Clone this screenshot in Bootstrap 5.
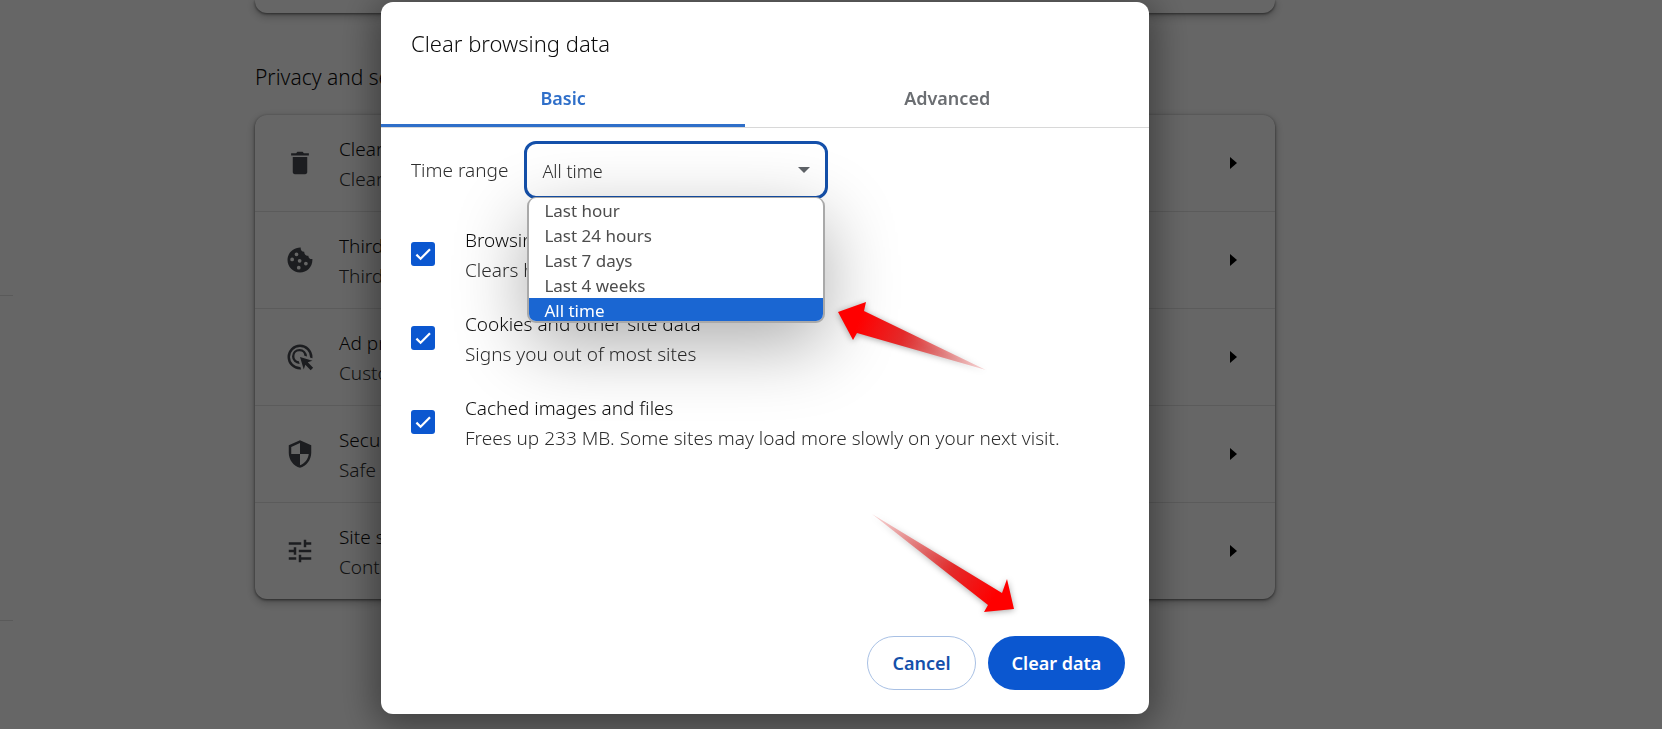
<!DOCTYPE html>
<html lang="en">
<head>
<meta charset="utf-8">
<meta name="viewport" content="width=device-width, initial-scale=1">
<title>Settings - Privacy and security</title>
<link href="https://cdn.jsdelivr.net/npm/bootstrap@5.3.0/dist/css/bootstrap.min.css" rel="stylesheet">
<style>
  :root { --gutter-end: 132px; --ink: #0c0c0c; --ink-soft: #2e2e2e; --accent: #0b57d0; --line: #e3e3e3; }
  body { font-family: "Noto Sans", "Open Sans", sans-serif; font-size: 19px; font-weight: 300; line-height: 30px; color: var(--ink); background: #fff; overflow: hidden; }
  .settings-page { min-height: 100vh; padding-right: var(--gutter-end); }
  .side-menu { width: 13px; left: 0; top: 0; padding-top: 295px; }
  .side-menu hr { margin: 0; color: #000; opacity: .12; }
  .side-menu hr + hr { margin-top: 324px; }
  .settings-main { max-width: 1020px; }
  .panel { border: 0; border-radius: 12px; box-shadow: 0 1px 3px rgba(0,0,0,.55), 0 3px 8px 1px rgba(0,0,0,.22); }
  .panel-above { height: 13px; border-radius: 0 0 12px 12px; }
  .section-title { font-size: 21px; line-height: 30px; margin: 49px 0 23px; font-weight: 300; }
  .setting-row { height: 97px; padding: 0 38px 0 30px; border: 0; border-bottom: 1px solid var(--line); background: transparent; color: var(--ink); }
  .setting-row:last-child { border-bottom: 0; height: 96px; }
  .setting-row svg.row-icon { width: 30px; height: 30px; fill: #474a50; margin-right: 24px; flex: none; }
  .row-text { padding-top: 2px; }
  .soft-text { color: var(--ink-soft); }
  .modal-backdrop.show { opacity: .6; }
  .modal { padding-right: var(--gutter-end); overflow: hidden; }
  .clear-dialog { max-width: 768px; margin: 2px auto 0; }
  .clear-dialog .modal-content { min-height: calc(100vh - 17px); border: 0; border-radius: 12px; box-shadow: 0 6px 36px 6px rgba(0,0,0,.4); color: var(--ink); }
  .clear-dialog .modal-header { border: 0; padding: 27px 30px 13px; }
  .clear-dialog .modal-title { font-size: 22px; line-height: 28px; font-weight: 300; }
  .range-tabs { border-bottom: 1px solid #d8d8d8; }
  .range-tabs .nav-link { border: 0; border-radius: 0; border-bottom: 3px solid transparent; padding: 15px 12px 12px; line-height: 27px; font-weight: 600; font-size: 18px; color: #6b6e72; background: none; }
  .range-tabs .nav-link.active { color: #2f6fc9; background: none; border-color: #2f6fc9; border-radius: 0 3px 0 0; }
  .tab-basic { flex: 363 1 0; }
  .tab-advanced { flex: 405 1 0; }
  .clear-dialog .modal-body { padding: 13px 30px 0; }
  .range-row { height: 58px; gap: 16px; margin-bottom: 26px; }
  .range-select { width: 304px; height: 58px; border: 3px solid #1450aa; border-radius: 12px; padding: 3px 15px 0; font-size: 18px; font-weight: 300; color: var(--ink-soft); background-image: none; }
  .range-select:focus { border-color: #1450aa; box-shadow: none; }
  .range-caret { right: 18px; top: 26px; width: 12px; height: 6px; fill: #5f6368; }
  .range-list { left: 3px; right: 3px; top: 56px; background: #fff; border: 2px solid #a9a9a9; border-top-width: 1px; border-radius: 9px; overflow: hidden; z-index: 3; box-shadow: 0 22px 72px rgba(0,0,0,.32); }
  .range-list li { height: 25px; line-height: 25px; padding-left: 15px; font-size: 17px; font-weight: 400; color: #4d4d4d; }
  .range-list li.chosen { height: 23px; color: #fff; background: #1a66d2; }
  .data-list { gap: 24px; }
  .data-item { gap: 30px; padding: 0; margin: 0; min-height: 0; }
  .data-item .form-check-input { width: 24px; height: 24px; margin: 0 0 2px; float: none; border: 0; border-radius: 3px; flex: none; }
  .data-item .form-check-input:checked { background-color: var(--accent); background-size: 24px; background-image: url("data:image/svg+xml,%3csvg xmlns='http://www.w3.org/2000/svg' viewBox='0 0 24 24'%3e%3cpath fill='none' stroke='%23fff' stroke-width='2.2' d='M5.4 12.6l4.2 4.2L19 7.2'/%3e%3c/svg%3e"); }
  .clear-dialog .modal-footer { border: 0; padding: 0 24px 24px; gap: 12px; }
  .clear-dialog .modal-footer > * { margin: 0; }
  .pill { height: 54px; border-radius: 27px; font-size: 18px; font-weight: 600; padding: 0; }
  .pill-cancel { width: 109px; border: 1px solid #a8c0e4; color: #1450aa; background: #fff; }
  .pill-clear { width: 137px; border: 0; color: #fff; background: var(--accent); }
  .pointer-arrow { overflow: visible; pointer-events: none; filter: drop-shadow(0 1px 3px rgba(0,0,0,.35)); z-index: 4; }
  .arrow-range { width: 160px; height: 80px; left: 306px; top: 154px; }
  .arrow-clear { width: 160px; height: 112px; right: 124px; bottom: 94px; }
</style>
</head>
<body>
<div class="settings-page position-relative">
  <aside class="side-menu position-absolute"><hr><hr></aside>
  <main class="settings-main mx-auto">
    <div class="card panel panel-above"></div>
    <h2 class="section-title">Privacy and security</h2>
    <div class="card panel">
      <a href="#" class="setting-row d-flex align-items-center text-decoration-none">
        <svg class="row-icon" viewBox="0 0 24 24"><path d="M6.2 19.2c0 1.1.7 1.7 1.7 1.7h8.200c1 0 1.700-.6 1.700-1.700V7.200H6.200zM19.100 4.200h-4l-1-1.200H9.900l-1 1.200h-4v1.700h14.200z"/></svg>
        <div class="row-text flex-grow-1 text-nowrap"><div>Clear browsing data</div><div class="soft-text">Clear history, cookies, cache, and more</div></div>
        <svg width="7" height="14" viewBox="0 0 7 14"><path d="M0 1l7 6-7 6z"/></svg>
      </a>
      <a href="#" class="setting-row d-flex align-items-center text-decoration-none">
        <svg class="row-icon" viewBox="0 0 24 24"><path fill-rule="evenodd" d="M21.900 11.200c-1.700.3-3.300-.8-3.200-2.600-2.100.1-3.400-1-3.300-3.200-2 .1-3.100-1.500-2.800-3.400C6.800 1.800 2 6.300 2 12c0 5.500 4.500 10 10 10 5.700 0 10.300-4.900 9.900-10.800zM9.200 5.900a1.500 1.500 0 1 1 0 3 1.500 1.500 0 0 1 0-3zM5.700 10a1.500 1.500 0 1 1 0 3 1.500 1.500 0 0 1 0-3zm6 1.100a1.500 1.500 0 1 1 0 3 1.500 1.500 0 0 1 0-3zm5 2.200a1.500 1.500 0 1 1 0 3 1.500 1.500 0 0 1 0-3zM11 16.600a1.500 1.500 0 1 1 0 3 1.500 1.500 0 0 1 0-3z"/></svg>
        <div class="row-text flex-grow-1 text-nowrap"><div>Third-party cookies</div><div class="soft-text">Third-party cookies are blocked in Incognito mode</div></div>
        <svg width="7" height="14" viewBox="0 0 7 14"><path d="M0 1l7 6-7 6z"/></svg>
      </a>
      <a href="#" class="setting-row d-flex align-items-center text-decoration-none">
        <svg class="row-icon" viewBox="0 0 24 24"><path d="M11.700 17.500A6 6 0 1 1 17.600 11.600l-2.100-.6a4 4 0 1 0-4.400 4.400zM22 12c0 .3 0 .600-.050.900l-1.950-.600V12a8 8 0 1 0-8 8h.3l.6 1.950c-.3.050-.6.050-.9.050a10 10 0 1 1 10-10zm-3.770 4.260L22 15l-10-3 3 10 1.260-3.770 4.270 4.270 1.980-1.980z"/></svg>
        <div class="row-text flex-grow-1 text-nowrap"><div>Ad privacy</div><div class="soft-text">Customize the info used by sites to show you ads</div></div>
        <svg width="7" height="14" viewBox="0 0 7 14"><path d="M0 1l7 6-7 6z"/></svg>
      </a>
      <a href="#" class="setting-row d-flex align-items-center text-decoration-none">
        <svg class="row-icon" viewBox="0 0 24 24"><path d="M12 1L3 5v6c0 5.550 3.840 10.740 9 12 5.160-1.260 9-6.450 9-12V5l-9-4zm0 10.990h7c-.53 4.120-3.280 7.790-7 8.940V12H5V6.300l7-3.110v8.800z"/></svg>
        <div class="row-text flex-grow-1 text-nowrap"><div>Security</div><div class="soft-text">Safe Browsing (protection from dangerous sites) and other security settings</div></div>
        <svg width="7" height="14" viewBox="0 0 7 14"><path d="M0 1l7 6-7 6z"/></svg>
      </a>
      <a href="#" class="setting-row d-flex align-items-center text-decoration-none">
        <svg class="row-icon" viewBox="0 0 24 24"><path d="M3 17v2h6v-2H3zM3 5v2h10V5H3zm10 16v-2h8v-2h-8v-2h-2v6h2zM7 9v2H3v2h4v2h2V9H7zm14 4v-2H11v2h10zm-6-4h2V7h4V5h-4V3h-2v6z"/></svg>
        <div class="row-text flex-grow-1 text-nowrap"><div>Site settings</div><div class="soft-text">Controls what information sites can use and show</div></div>
        <svg width="7" height="14" viewBox="0 0 7 14"><path d="M0 1l7 6-7 6z"/></svg>
      </a>
    </div>
  </main>
</div>

<div class="modal-backdrop show"></div>
<div class="modal show d-block" role="dialog" aria-modal="true" aria-labelledby="dialog-title">
  <div class="modal-dialog clear-dialog">
    <div class="modal-content">
      <div class="modal-header"><h1 class="modal-title" id="dialog-title">Clear browsing data</h1></div>
      <div class="nav range-tabs" role="tablist">
        <button type="button" class="nav-link active tab-basic" role="tab" aria-selected="true">Basic</button>
        <button type="button" class="nav-link tab-advanced" role="tab" aria-selected="false">Advanced</button>
      </div>
      <div class="modal-body">
        <div class="range-row d-flex align-items-center">
          <label for="range" class="soft-text text-nowrap">Time range</label>
          <div class="position-relative">
            <select id="range" class="form-select range-select"><option>All time</option></select>
            <svg class="range-caret position-absolute" viewBox="0 0 12 6"><path d="M0 0h12L6 6z"/></svg>
            <ul class="range-list list-unstyled position-absolute mb-0" aria-label="Time range choices">
              <li>Last hour</li>
              <li>Last 24 hours</li>
              <li>Last 7 days</li>
              <li>Last 4 weeks</li>
              <li class="chosen">All time</li>
            </ul>
            <svg class="pointer-arrow arrow-range position-absolute" viewBox="0 0 160 80" aria-hidden="true">
              <defs><linearGradient id="fade-range" gradientUnits="userSpaceOnUse" x1="28" y1="27" x2="154" y2="74"><stop offset="0" stop-color="#f00"/><stop offset=".35" stop-color="#e32a2a"/><stop offset="1" stop-color="#e87070" stop-opacity=".3"/></linearGradient></defs>
              <path fill="url(#fade-range)" d="M8 17l28-10-2 9L156 75 27 38l-4 7z"/>
            </svg>
          </div>
        </div>
        <div class="data-list d-flex flex-column">
          <div class="form-check data-item d-flex align-items-center">
            <input class="form-check-input" type="checkbox" id="history" checked>
            <label for="history"><span class="d-block">Browsing history</span><span class="d-block soft-text">Clears history from all synced devices</span></label>
          </div>
          <div class="form-check data-item d-flex align-items-center">
            <input class="form-check-input" type="checkbox" id="cookies" checked>
            <label for="cookies"><span class="d-block">Cookies and other site data</span><span class="d-block soft-text">Signs you out of most sites</span></label>
          </div>
          <div class="form-check data-item d-flex align-items-center">
            <input class="form-check-input" type="checkbox" id="cache" checked>
            <label for="cache"><span class="d-block">Cached images and files</span><span class="d-block soft-text">Frees up 233 MB. Some sites may load more slowly on your next visit.</span></label>
          </div>
        </div>
      </div>
      <div class="modal-footer position-relative">
        <button type="button" class="btn pill pill-cancel">Cancel</button>
        <button type="button" class="btn pill pill-clear">Clear data</button>
        <svg class="pointer-arrow arrow-clear position-absolute" viewBox="0 0 160 112" aria-hidden="true">
          <defs><linearGradient id="fade-clear" gradientUnits="userSpaceOnUse" x1="130" y1="88" x2="9" y2="8"><stop offset="0" stop-color="#f00"/><stop offset=".35" stop-color="#e32a2a"/><stop offset="1" stop-color="#e87070" stop-opacity=".3"/></linearGradient></defs>
          <path fill="url(#fade-clear)" d="M7 6l130 79 5-14 7 30-30 3 4-7z"/>
        </svg>
      </div>
    </div>
  </div>
</div>
<script src="https://cdn.jsdelivr.net/npm/bootstrap@5.3.0/dist/js/bootstrap.bundle.min.js"></script>
</body>
</html>
